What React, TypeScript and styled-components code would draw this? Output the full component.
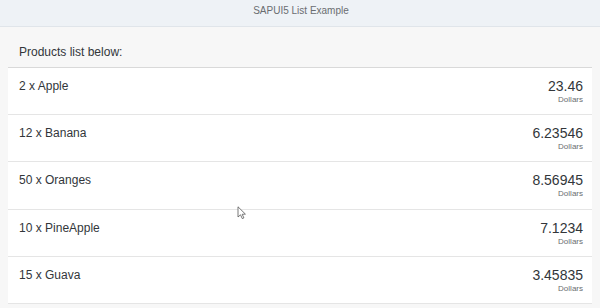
import React from "react";
import styled, { createGlobalStyle } from "styled-components";

const Global = createGlobalStyle`
  html, body { margin: 0; padding: 0; background: #f7f7f7; }
  body { font-family: "Liberation Sans", Arial, sans-serif; color: #32363a; }
`;

const Page = styled.div`
  position: relative;
  width: 600px;
  height: 308px;
  overflow: hidden;
  background: #f7f7f7;
`;

const TitleBar = styled.header`
  height: 26px;
  box-sizing: content-box;
  border-bottom: 1px solid #e0e5ea;
  background: #eef2f6;
  display: flex;
  justify-content: center;
  align-items: flex-start;
`;

const Title = styled.span`
  font-size: 10px;
  line-height: 21px;
  color: #6a6d70;
  padding-left: 2px;
`;

const Content = styled.main`
  padding: 0 8px;
`;

const ListHeader = styled.div`
  height: 41px;
  box-sizing: border-box;
  padding: 18px 11px 0;
  font-size: 12px;
  line-height: 14px;
  color: #32363a;
  border-bottom: 1px solid #d9d9d9;
`;

const List = styled.ul`
  list-style: none;
  margin: 0;
  padding: 0;
`;

const Row = styled.li`
  height: 47.2px;
  box-sizing: border-box;
  background: #fff;
  border-bottom: 1px solid #e5e5e5;
  display: flex;
  justify-content: space-between;
  align-items: flex-start;
  padding: 11px 9px 0 11px;
`;

const ItemTitle = styled.span`
  font-size: 12px;
  line-height: 14px;
  color: #32363a;
`;

const NumberBlock = styled.div`
  display: flex;
  flex-direction: column;
  align-items: flex-end;
`;

const Amount = styled.span`
  font-size: 14px;
  line-height: 15px;
  color: #32363a;
`;

const Unit = styled.span`
  margin-top: 1px;
  font-size: 8px;
  line-height: 10px;
  color: #6a6d70;
`;

const Cursor = styled.svg`
  position: absolute;
  left: 237px;
  top: 206px;
  width: 10px;
  height: 14px;
`;

const items = [
  { qty: 2, name: "Apple", price: "23.46" },
  { qty: 12, name: "Banana", price: "6.23546" },
  { qty: 50, name: "Oranges", price: "8.56945" },
  { qty: 10, name: "PineApple", price: "7.1234" },
  { qty: 15, name: "Guava", price: "3.45835" },
];

export default function App() {
  return (
    <>
      <Global />
      <Page>
        <TitleBar>
          <Title>SAPUI5 List Example</Title>
        </TitleBar>
        <Content>
          <ListHeader>Products list below:</ListHeader>
          <List>
            {items.map((it) => (
              <Row key={it.name}>
                <ItemTitle>
                  {it.qty} x {it.name}
                </ItemTitle>
                <NumberBlock>
                  <Amount>{it.price}</Amount>
                  <Unit>Dollars</Unit>
                </NumberBlock>
              </Row>
            ))}
          </List>
        </Content>
        <Cursor viewBox="0 0 10 14">
          <path
            d="M1 0.8 L1 11 L3.5 8.8 L5.3 12.6 L6.9 11.9 L5.2 8.3 L8.4 8.1 Z"
            fill="#fff"
            stroke="#555"
            strokeWidth="0.8"
            strokeLinejoin="round"
          />
        </Cursor>
      </Page>
    </>
  );
}
